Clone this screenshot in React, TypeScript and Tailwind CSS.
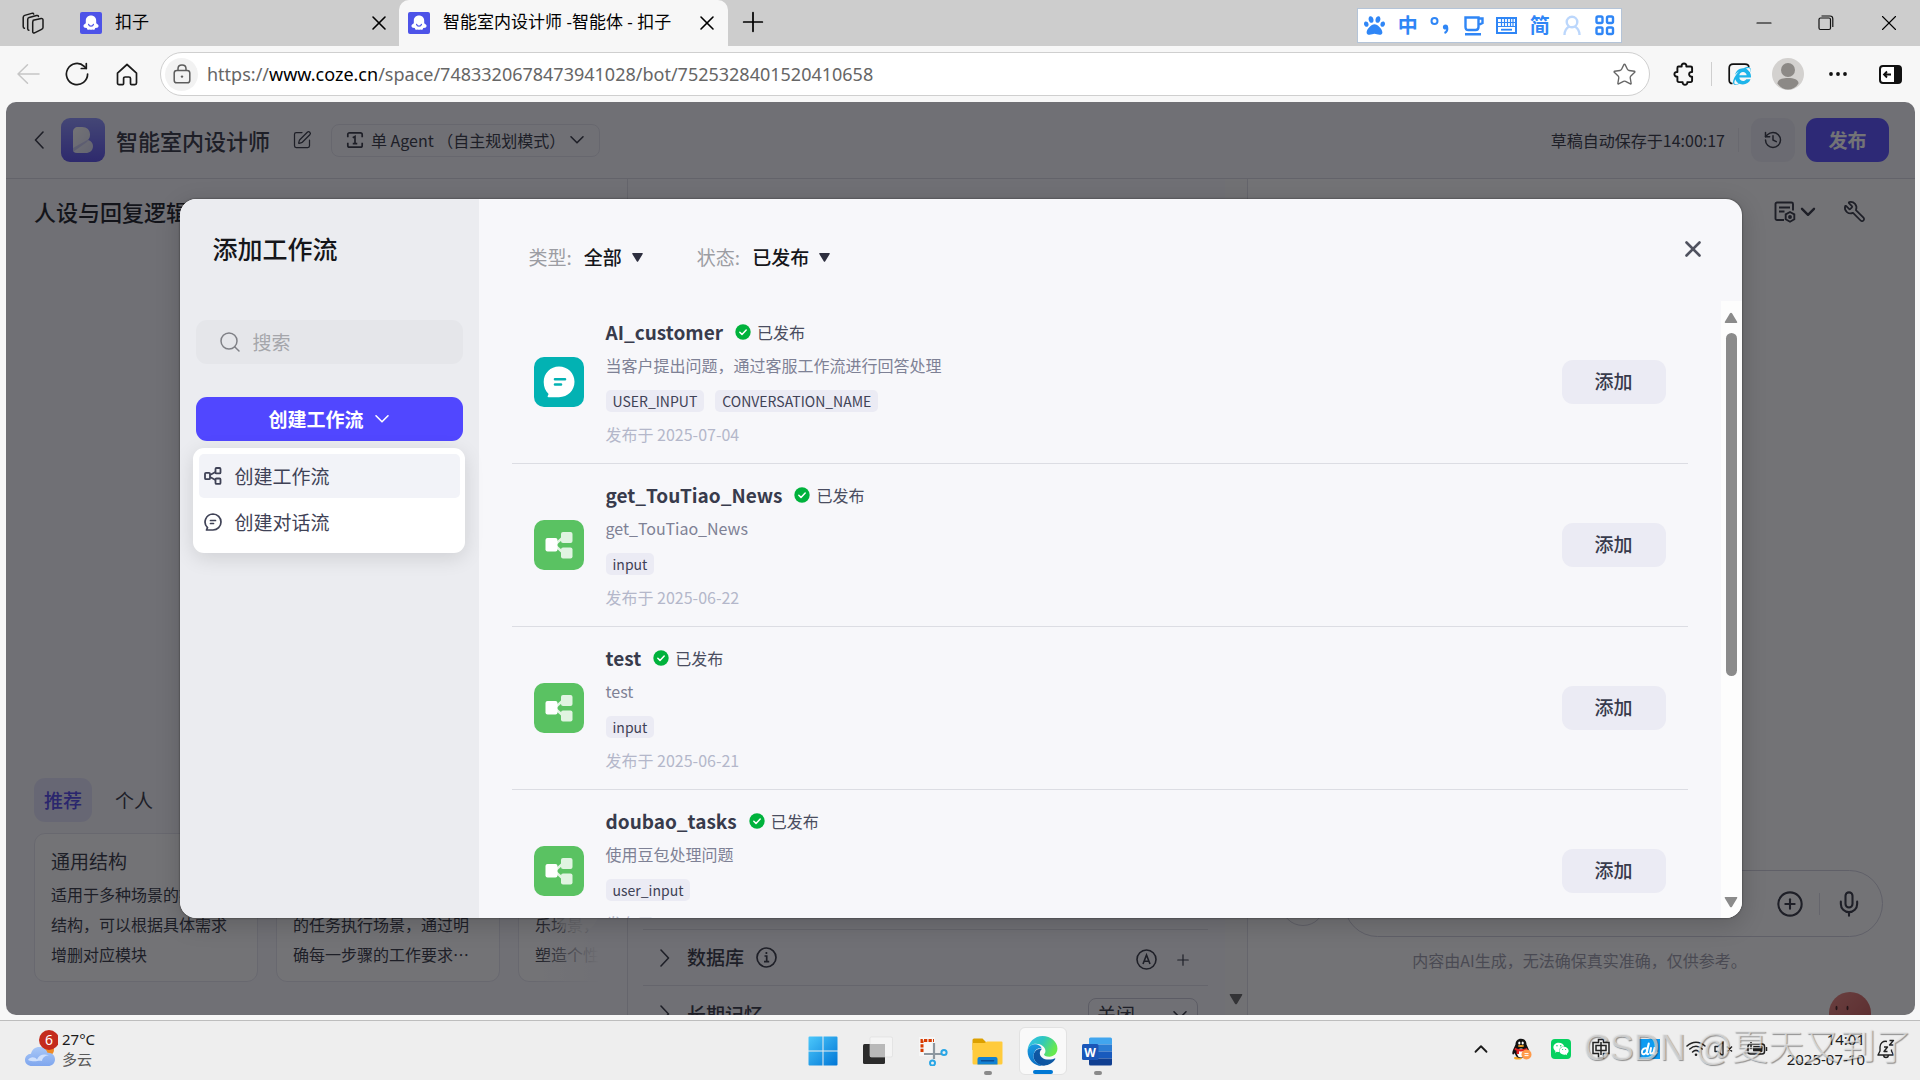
import React from "react";
import { ChevronRight, ChevronUp, CirclePlus, History, Mic, Minus, Plus, Search, SquarePen, Star, Wrench, X } from "lucide-react";
import { FaInternetExplorer, FaPaw, FaWeixin } from "react-icons/fa";

type Workflow = {
  name: string;
  desc: string;
  tags: string[];
  date: string;
  kind: "chat" | "flow";
};

const workflows: Workflow[] = [
  { name: "AI_customer", desc: "当客户提出问题，通过客服工作流进行回答处理", tags: ["USER_INPUT", "CONVERSATION_NAME"], date: "2025-07-04", kind: "chat" },
  { name: "get_TouTiao_News", desc: "get_TouTiao_News", tags: ["input"], date: "2025-06-22", kind: "flow" },
  { name: "test", desc: "test", tags: ["input"], date: "2025-06-21", kind: "flow" },
  { name: "doubao_tasks", desc: "使用豆包处理问题", tags: ["user_input"], date: "2025-06-20", kind: "flow" },
];

/* ---------- Thin angle icons ---------- */

function AngleDown({ className, bold }: { className?: string; bold?: boolean }) {
  return (
    <svg width="16" height="10" viewBox="0 0 16 10" fill="none" stroke="currentColor" strokeWidth={bold ? 2.4 : 1.6} strokeLinecap="round" strokeLinejoin="round" className={className} aria-hidden="true">
      <path d="M2 1.800l6 6 6-6" />
    </svg>
  );
}

function AngleSide({ className, left }: { className?: string; left?: boolean }) {
  return (
    <svg width="10" height="18" viewBox="0 0 10 18" fill="none" stroke="currentColor" strokeWidth="1.600" strokeLinecap="round" strokeLinejoin="round" className={className} aria-hidden="true">
      <path d={left ? "M9 1L1.500 9 9 17" : "M1 1l7.500 8L1 17"} />
    </svg>
  );
}

/* ---------- Browser chrome ---------- */

function CozeFavicon() {
  return (
    <svg width="22" height="22" viewBox="0 0 22 22" className="shrink-0" aria-hidden="true">
      <rect width="22" height="22" rx="2" fill="#4d53e8" />
      <path d="M11 3.6c-3.1 0-5.2 2.2-5.2 5.2v2.4l-1.9 1.6c-.9.9-.4 2.7.9 2.9l2 .2c.2 1.700 1.400 2.200 2.700 1.600.900.500 2.100.500 3 0 1.300.6 2.500.1 2.700-1.600l2-.2c1.300-.2 1.800-2 .9-2.900l-1.900-1.600V8.800c0-3-2.100-5.200-5.200-5.200z" fill="#fff" />
      <path d="M8.600 12.300c.6 2.300 4.200 2.300 4.800 0" fill="none" stroke="#4d53e8" strokeWidth="1.300" strokeLinecap="round" />
    </svg>
  );
}

function TabStrip() {
  return (
    <div className="flex h-[46px] shrink-0 bg-[#cdcdcd] font-['Noto_Sans','Noto_Sans_CJK_SC',sans-serif] text-black">
      <button aria-label="标签页操作" className="flex w-[66px] items-center justify-center">
        <svg width="24" height="24" viewBox="0 0 24 24" fill="none" stroke="#1b1b1b" strokeWidth="1.500" strokeLinejoin="round" strokeLinecap="round">
          <path d="M12.200 9.300l8-1.800c1-.2 1.800.4 1.800 1.400v7.600c0 .9-.5 1.500-1.400 1.800l-7 3.500c-1 .4-1.900 0-1.900-1.100v-9.400c0-1 .2-1.700 1-2z" />
          <path d="M7.800 19.300c-.9-.2-1.100-.7-1.100-1.500V8.600c0-1.200.5-1.800 1.500-2.200l7.300-1.800c1-.2 1.800 0 2 .8" />
          <path d="M3.400 17.300c-.9-.2-1.200-.8-1.200-1.700V6.600c0-1.200.5-1.900 1.500-2.200l7-2c1-.3 1.800-.1 2 .7" />
        </svg>
      </button>
      <div className="flex w-[333px] items-center gap-[13px] pl-3.5 pr-2">
        <CozeFavicon />
        <span className="flex-1 pb-0.5 text-[17px] leading-6">扣子</span>
        <button aria-label="关闭标签页">
          <X size={24} strokeWidth={1.6} />
        </button>
      </div>
      <div className="flex w-[329px] items-center gap-[13px] rounded-t-[10px] bg-[#f7f7f7] px-[9px]">
        <CozeFavicon />
        <span className="flex-1 whitespace-nowrap pb-0.5 text-[17px] leading-6">智能室内设计师 -智能体 - 扣子</span>
        <button aria-label="关闭标签页">
          <X size={24} strokeWidth={1.6} />
        </button>
      </div>
      <button aria-label="新建标签页" className="flex w-[50px] items-center justify-center pb-0.5">
        <Plus size={32} strokeWidth={1.3} />
      </button>
      <div className="flex-1" />
      <div className="mt-2 flex h-[35px] w-[265px] items-center justify-around border border-[#b4c4d8] bg-white text-[#2f86f6]">
        <FaPaw size={21} />
        <span className="text-[20px] font-bold leading-6">中</span>
        <svg width="20" height="20" viewBox="0 0 20 20" fill="none" stroke="currentColor">
          <circle cx="4.500" cy="5" r="3" strokeWidth="2" />
          <circle cx="15.500" cy="11" r="2.600" fill="currentColor" stroke="none" />
          <path d="M17.300 11.500c.3 2.800-.8 4.600-2.800 5.500" strokeWidth="2" />
        </svg>
        <svg width="21" height="21" viewBox="0 0 21 21" fill="none" stroke="currentColor" strokeWidth="2.400">
          <path d="M2.500 2.500h13v9.500c0 2-1 3-3 3h-7c-2 0-3-1-3-3zM15.500 3.500h4v4.500l-4 2M2 19.200h16" />
        </svg>
        <svg width="21" height="17" viewBox="0 0 21 17" fill="none" stroke="currentColor">
          <rect x="1" y="1" width="19" height="15" strokeWidth="2" />
          <path d="M2 5.500h17M2 9.500h17" strokeWidth="1.200" />
          <path d="M5.500 2v7.500M8.500 2v7.500M11.500 2v7.500M14.500 2v7.500M17 2v7.500" strokeWidth="1.200" />
          <path d="M5 12.700h11" strokeWidth="1.800" />
        </svg>
        <span className="text-[20px] font-bold leading-6">简</span>
        <svg width="20" height="21" viewBox="0 0 20 21" fill="none" stroke="#bcd7fc" strokeWidth="2.400">
          <circle cx="10" cy="7" r="5.300" />
          <path d="M2.500 20c0-4 2-7 4.700-8.500M17.500 20c0-4-2-7-4.700-8.500" />
        </svg>
        <svg width="20" height="21" viewBox="0 0 20 21" fill="none" stroke="currentColor" strokeWidth="2.400">
          <rect x="1.500" y="1.500" width="6" height="6.500" rx="1.500" />
          <rect x="12" y="1.500" width="6" height="6.500" rx="1.500" />
          <rect x="1.500" y="12.500" width="6" height="6.500" rx="1.500" />
          <rect x="12" y="12.500" width="6" height="6.500" rx="1.500" />
        </svg>
      </div>
      <div className="ml-[111px] flex w-[187px] items-center">
        <button aria-label="最小化" className="flex flex-1 justify-center">
          <Minus size={24} strokeWidth={1.2} />
        </button>
        <button aria-label="还原" className="flex flex-1 justify-center">
          <svg width="16" height="16" viewBox="0 0 16 16" fill="none" stroke="#111" strokeWidth="1.200">
            <rect x="1" y="3" width="11.500" height="11.500" rx="1.500" />
            <path d="M3.500 1h8.500c1.800 0 2.800 1 2.800 2.800V12" />
          </svg>
        </button>
        <button aria-label="关闭" className="flex flex-1 justify-center">
          <X size={26} strokeWidth={1} />
        </button>
      </div>
    </div>
  );
}

function Toolbar() {
  return (
    <div className="flex h-14 shrink-0 items-center bg-[#f7f7f7] text-[#1b1b1b]">
      <button aria-label="后退" className="flex w-14 justify-center">
        <svg width="24" height="22" viewBox="0 0 24 22" fill="none" stroke="#c6c6c6" strokeWidth="1.500" strokeLinecap="round" strokeLinejoin="round">
          <path d="M23 11H2M11.500 1.800L2 11l9.500 9.200" />
        </svg>
      </button>
      <button aria-label="刷新" className="flex w-[42px] justify-center">
        <svg width="24" height="24" viewBox="0 0 24 24" fill="none" stroke="currentColor" strokeWidth="1.700" strokeLinecap="round" strokeLinejoin="round">
          <path d="M22.600 12a10.600 10.600 0 1 1-3.400-7.700l2 2" />
          <path d="M21.300 1.500v5h-5" />
        </svg>
      </button>
      <button aria-label="主页" className="flex w-[58px] justify-center">
        <svg width="22" height="23" viewBox="0 0 22 23" fill="none" stroke="currentColor" strokeWidth="1.700" strokeLinejoin="round">
          <path d="M1.500 10.200L11 1.500l9.500 8.700v9.800c0 1-.6 1.600-1.600 1.600h-3.400c-.6 0-1-.4-1-1v-5c0-1-.6-1.600-1.600-1.600H9.200c-1 0-1.600.6-1.600 1.600v5c0 .6-.4 1-1 1H3.100c-1 0-1.600-.6-1.600-1.600z" />
        </svg>
      </button>
      <div className="ml-1 flex h-11 flex-1 items-center rounded-full border border-[#cfcfcf] bg-white pl-1 pr-3">
        <button aria-label="查看站点信息" className="flex size-[33px] items-center justify-center rounded-full bg-[#f2f2f2]">
          <svg width="18" height="20" viewBox="0 0 18 20" fill="none" stroke="#5c5c5c" strokeWidth="1.500">
            <rect x="1.200" y="6.500" width="15.600" height="12.300" rx="2.600" />
            <path d="M5 6.500V4.700C5 2.300 6.600 1 9 1s4 1.300 4 3.700v1.800" />
            <circle cx="9" cy="12.600" r="1.200" fill="#5c5c5c" stroke="none" />
          </svg>
        </button>
        <div role="textbox" aria-label="地址栏" className="ml-[9px] flex-1 whitespace-nowrap font-['Noto_Sans',sans-serif] text-[18px] leading-6 text-[#666]">
          https://<span className="text-black">www.coze.cn</span>/space/7483320678473941028/bot/7525328401520410658
        </div>
        <button aria-label="收藏">
          <Star size={25} strokeWidth={1.3} color="#666" />
        </button>
      </div>
      <button aria-label="扩展" className="ml-[23px]">
        <svg width="22" height="24" viewBox="0 0 22 24" fill="none" stroke="#111" strokeWidth="1.900" strokeLinejoin="round">
          <path d="M5.500 4.500h3.200c-.8-4 5.400-4 4.600 0h4.200c1 0 1.600.6 1.600 1.500v4c-4-.6-4 5.200 0 4.600v4c0 1-.6 1.500-1.600 1.500h-3.200c.8 3.500-5.400 3.500-4.600 0H6c-1 0-1.600-.5-1.600-1.500v-3.900c-4 .2-4-5.300 0-4.700V6c0-1 .5-1.500 1.100-1.500z" />
        </svg>
      </button>
      <div className="ml-4 h-6 w-px bg-[#cfcfcf]" />
      <button aria-label="Internet Explorer 模式" className="relative ml-4 size-6">
        <svg width="22" height="22" viewBox="0 0 22 22" fill="none" stroke="#111" strokeWidth="1.700">
          <path d="M4.500 20.500c-2.200 0-3.300-1.200-3.300-3.600V5c0-2.400 1.400-3.800 3.800-3.800h12c2.400 0 3.800 1 3.800 3" />
        </svg>
        <FaInternetExplorer size={18} color="#1eb4ea" className="absolute left-[5px] top-[5px]" />
      </button>
      <button aria-label="个人资料" className="ml-5">
        <svg width="32" height="32" viewBox="0 0 32 32">
          <circle cx="16" cy="16" r="16" fill="#d3d1cf" />
          <circle cx="16" cy="12" r="7" fill="#8c8986" />
          <path d="M5.500 25.500c0-4 4.500-5.500 10.500-5.500s10.500 1.500 10.500 5.500C24 29.500 20 31.500 16 31.500S8 29.500 5.500 25.500z" fill="#8c8986" />
        </svg>
      </button>
      <button aria-label="设置及其他" className="ml-6">
        <svg width="20" height="6" viewBox="0 0 20 6" fill="#111">
          <circle cx="3" cy="3" r="1.900" />
          <circle cx="10" cy="3" r="1.900" />
          <circle cx="17" cy="3" r="1.900" />
        </svg>
      </button>
      <button aria-label="侧边栏" className="ml-[31px] mr-[18px]">
        <svg width="23" height="19" viewBox="0 0 23 19">
          <rect x="1" y="1" width="21" height="17" rx="3" fill="#fff" stroke="#111" strokeWidth="2" />
          <path d="M15 1h5a2 2 0 0 1 2 2v13a2 2 0 0 1-2 2h-5z" fill="#111" />
          <path d="M12 9.500H5M8 6.500l-3 3 3 3" fill="none" stroke="#111" strokeWidth="1.800" />
        </svg>
      </button>
    </div>
  );
}

/* ---------- Agent editor behind the dialog ---------- */

function AgentHeader() {
  return (
    <header className="flex h-[77px] shrink-0 items-center border-b border-[#d8d8e2] bg-[#f7f7fc] pl-7 pr-[26px] text-[#2b2e3b]">
      <button aria-label="返回">
        <AngleSide left />
      </button>
      <svg width="44" height="44" viewBox="0 0 44 44" className="ml-[17px]" aria-hidden="true">
        <defs>
          <linearGradient id="agentBg" x1="0" y1="0" x2="0" y2="1">
            <stop offset="0" stopColor="#8a90ff" />
            <stop offset="1" stopColor="#5248e8" />
          </linearGradient>
          <linearGradient id="agentB" x1="0" y1="0" x2="1" y2="1">
            <stop offset="0" stopColor="#fff" />
            <stop offset="1" stopColor="#d9daf2" />
          </linearGradient>
        </defs>
        <rect width="44" height="44" rx="9" fill="url(#agentBg)" />
        <path d="M12 14c0-3 2-5 5-5h4c5 0 8 3 8 7.500 0 2.500-.6 4-2 5.500 3 .8 5 3 5 6 0 4.600-3 7-7.500 7H16c-3 0-4-1.500-4-4z" fill="url(#agentB)" />
        <path d="M12 30l16-9-2 3-14 10z" fill="#b9baf0" opacity=".7" />
      </svg>
      <h1 className="ml-[11px] text-[22px] font-medium leading-8">智能室内设计师</h1>
      <button aria-label="编辑" className="ml-[22px]">
        <SquarePen size={20} strokeWidth={1.5} />
      </button>
      <button className="ml-[19px] flex h-[33px] items-center rounded-lg border border-[#e2e2ec] px-3.5 text-[16px]">
        <svg width="18" height="18" viewBox="0 0 20 20" fill="none" stroke="currentColor" strokeWidth="1.900">
          <path d="M2 7V4c0-1.300.7-2 2-2h12c1.300 0 2 .7 2 2v3M2 13v3c0 1.300.7 2 2 2h12c1.300 0 2-.7 2-2v-3M7.500 7.500L10 6v8M7.500 14h5" />
        </svg>
        <span className="ml-[7px] whitespace-nowrap">单 Agent （自主规划模式）</span>
        <AngleDown className="ml-1" />
      </button>
      <div className="flex-1" />
      <span className="text-[16px] leading-6">草稿自动保存于14:00:17</span>
      <div className="ml-[13px] h-6 w-px bg-[#e6e6ee]" />
      <button aria-label="历史版本" className="ml-3 flex size-11 items-center justify-center rounded-[11px] bg-[#ebebf4]">
        <History size={20} strokeWidth={1.8} />
      </button>
      <button className="ml-[11px] h-11 w-[83px] rounded-[11px] bg-[#5147ff] text-[19px] font-bold text-white">发布</button>
    </header>
  );
}

function TemplateCard({ title, lines }: { title: string; lines: string[] }) {
  return (
    <article className="h-[149px] w-56 shrink-0 rounded-[11px] border border-[#e4e4ee] bg-white px-4 pt-3 text-[#2b2e3b]">
      <h3 className="text-[19px] leading-[29px]">{title}</h3>
      <div className="mt-1 text-[16px] leading-[30px]">
        {lines.map((line) => (
          <p key={line} className="whitespace-nowrap">
            {line}
          </p>
        ))}
      </div>
    </article>
  );
}

function PersonaPanel() {
  return (
    <section className="flex w-[622px] shrink-0 flex-col border-r border-[#dcdce6] bg-[#f7f7fc] pb-[33px] pl-7 pr-7 pt-4">
      <h2 className="text-[22px] font-medium leading-8 text-[#10131a]">人设与回复逻辑</h2>
      <div className="flex-1" />
      <div className="flex gap-[13px] text-[19px]">
        <button className="h-11 rounded-[11px] bg-[#e2e2fb] px-2.5 font-medium text-[#4a3fe8]">推荐</button>
        <button className="h-11 px-2.5 text-[#2b2e3b]">个人</button>
      </div>
      <div className="relative mt-[11px] flex gap-[18px] overflow-hidden">
        <TemplateCard title="通用结构" lines={["适用于多种场景的提示词", "结构，可以根据具体需求", "增删对应模块"]} />
        <TemplateCard title="任务执行" lines={["适用于有明确的工作步骤", "的任务执行场景，通过明", "确每一步骤的工作要求…"]} />
        <TemplateCard title="角色扮演" lines={["适用于聊天陪伴、互动娱", "乐场景，", "塑造个性"]} />
        <div className="absolute inset-y-0 right-0 w-16 bg-linear-to-r from-transparent to-[#f7f7fc]" />
        <button aria-label="下一组" className="absolute right-0 top-[56px] flex size-11 items-center justify-center rounded-full bg-white/60">
          <ChevronRight size={22} strokeWidth={3} />
        </button>
      </div>
    </section>
  );
}

function SkillsPanel() {
  return (
    <section className="flex w-[620px] shrink-0 border-r border-[#dcdce6] bg-[#f7f7fc] text-[#2b2e3b]">
      <div className="flex flex-1 flex-col justify-end pl-[15px] pr-[17px]">
        <div className="flex h-14 items-center border-t border-[#dcdce6] pl-[17px] pr-4">
          <AngleSide />
          <h3 className="ml-[17px] text-[19px] font-medium">数据库</h3>
          <svg width="21" height="21" viewBox="0 0 21 21" className="ml-3" fill="none" stroke="currentColor" strokeWidth="1.700">
            <circle cx="10.500" cy="10.500" r="9.500" />
            <path d="M8.500 9h2.200v5.500M8 14.700h5.200M10.400 5v2" />
          </svg>
          <div className="flex-1" />
          <svg width="21" height="21" viewBox="0 0 21 21" fill="none" stroke="currentColor" strokeWidth="1.600" className="mt-1">
            <circle cx="10.500" cy="10.500" r="9.500" />
            <path d="M7 15l3.500-9 3.500 9M8.200 12.300h4.600" />
          </svg>
          <Plus size={18} strokeWidth={1.6} className="ml-[17px] mt-1" />
        </div>
        <div className="h-[30px] overflow-hidden border-t border-[#dcdce6]">
          <div className="flex h-14 items-center pl-[17px] pr-2.5">
            <AngleSide />
            <h3 className="ml-[17px] flex-1 text-[19px] font-medium">长期记忆</h3>
            <div className="relative">
              <select aria-label="长期记忆" className="h-[33px] w-[110px] appearance-none rounded-lg border border-[#c6c6d4] pl-2 text-[19px] leading-7">
                <option>关闭</option>
              </select>
              <AngleDown className="absolute right-2.5 top-3" />
            </div>
          </div>
        </div>
      </div>
      <div className="flex w-[22px] flex-col items-center justify-end bg-[#fafafa] pb-[10px]">
        <svg width="14" height="12" viewBox="0 0 14 12" fill="#606060">
          <path d="M1.500 1h11c.8 0 1 .6.6 1.200L8 10.700c-.5.800-1.500.8-2 0L.9 2.200C.5 1.600.7 1 1.500 1z" />
        </svg>
      </div>
    </section>
  );
}

function PreviewPanel() {
  return (
    <section className="relative flex min-w-0 flex-1 flex-col overflow-hidden bg-white pb-[43px] text-[#2b2e3b]">
      <div className="flex items-center justify-end pr-[49px] pt-[21px]">
        <svg width="22" height="22" viewBox="0 0 22 22" fill="none" stroke="currentColor" strokeWidth="1.900">
          <path d="M10 19H3c-.8 0-1.500-.7-1.500-1.500V3c0-.8.7-1.500 1.500-1.500h14.500c.8 0 1.500.7 1.500 1.500v6.500M5 6.500h11M5 10.500h5.500" />
          <path d="M16 11l4.300 2.400v4.800L16 20.700l-4.300-2.500v-4.800z" />
          <circle cx="16" cy="16" r="1" fill="currentColor" />
        </svg>
        <AngleDown bold className="ml-1" />
        <Wrench size={23} strokeWidth={1.8} className="ml-[27px] -scale-x-100" />
      </div>
      <div className="flex-1" />
      <div className="flex items-center gap-[19px] pl-[33px] pr-8">
        <div className="size-11 rounded-full border border-[#d0d0dc]" />
        <div className="flex h-[67px] flex-1 items-center justify-end rounded-full border border-[#cfcfdd] pr-[19px]">
          <button aria-label="添加附件">
            <CirclePlus size={28} strokeWidth={1.8} />
          </button>
          <div className="mx-[15px] h-[22px] w-px bg-[#dcdce6]" />
          <button aria-label="语音输入">
            <Mic size={28} strokeWidth={1.8} />
          </button>
        </div>
      </div>
      <p className="mt-[11px] pr-1 text-center text-[16px] leading-6 text-[#9a9aa8]">内容由AI生成，无法确保真实准确，仅供参考。</p>
      <svg width="42" height="23" viewBox="0 0 42 23" className="absolute bottom-0 right-[44px]" aria-hidden="true">
        <defs>
          <linearGradient id="mascot" x1="0" y1="0" x2="1" y2="1">
            <stop offset="0" stopColor="#e88078" />
            <stop offset="1" stopColor="#c04a4a" />
          </linearGradient>
        </defs>
        <circle cx="21" cy="21" r="21" fill="url(#mascot)" />
        <ellipse cx="7.500" cy="16" rx="1" ry="2.300" fill="#3a1414" />
        <ellipse cx="18.500" cy="16" rx="1" ry="2.300" fill="#3a1414" />
      </svg>
    </section>
  );
}

/* ---------- Add-workflow dialog ---------- */

function WorkflowIcon({ kind }: { kind: Workflow["kind"] }) {
  if (kind === "chat") {
    return (
      <svg width="50" height="50" viewBox="0 0 50 50" className="shrink-0" aria-hidden="true">
        <rect width="50" height="50" rx="10" fill="#02b2b3" />
        <path d="M25 9.500c8.600 0 15.500 6.500 15.500 15.300S33.800 40.200 25 40.200H14.500c-.9 0-1.100-.6-.8-1.200l.9-2c-3.200-2.900-4.900-7-4.900-12C9.700 16 16.500 9.500 25 9.500z" fill="#fff" />
        <path d="M21 22.200h10M21 27.500h6" stroke="#02b2b3" strokeWidth="2.600" strokeLinecap="round" />
      </svg>
    );
  }
  return (
    <svg width="50" height="50" viewBox="0 0 50 50" className="shrink-0" aria-hidden="true">
      <rect width="50" height="50" rx="10" fill="#5ac262" />
      <path d="M30 16.500L20.500 25l9.500 8.500" fill="none" stroke="#e0f4e1" strokeWidth="2.400" />
      <rect x="27" y="12" width="11.500" height="11" rx="2" fill="#e0f4e1" />
      <rect x="27" y="27.500" width="11.500" height="11" rx="2" fill="#e0f4e1" />
      <rect x="11.500" y="18" width="12" height="13.500" rx="2" fill="#fff" />
    </svg>
  );
}

function WorkflowRow({ item }: { item: Workflow }) {
  return (
    <li className="flex items-center border-b border-[#dcdde3] px-[22px] pb-[17px] pt-4">
      <WorkflowIcon kind={item.kind} />
      <div className="ml-[22px] min-w-0 flex-1">
        <div className="flex items-center">
          <h3 className="text-[19px] font-semibold leading-[30px] text-[#383b4c]">{item.name}</h3>
          <svg width="16" height="16" viewBox="0 0 16 16" className="ml-3 shrink-0" aria-hidden="true">
            <circle cx="8" cy="8" r="7.700" fill="#00b23c" />
            <path d="M4.800 8.200l2.200 2.200 4.200-4.400" fill="none" stroke="#fff" strokeWidth="1.500" strokeLinecap="round" strokeLinejoin="round" />
          </svg>
          <span className="ml-1.5 text-[16px] leading-[30px] text-[#4a4d60]">已发布</span>
        </div>
        <p className="mt-1.5 text-[16px] leading-6 text-[#7e8195]">{item.desc}</p>
        <div className="mt-[13px] flex gap-[11px]">
          {item.tags.map((tag) => (
            <span key={tag} className="rounded-[5px] bg-[#ebebf4] px-[7px] text-[14px] leading-[22px] text-[#3f4256]">
              {tag}
            </span>
          ))}
        </div>
        <p className="mt-2.5 text-[16px] leading-6 text-[#b4b7ca]">发布于 {item.date}</p>
      </div>
      <button className="h-11 w-[104px] rounded-[11px] bg-[#ebebf4] text-[19px] font-medium text-[#383b4c]">添加</button>
    </li>
  );
}

function Filter({ id, label, value }: { id: string; label: string; value: string }) {
  return (
    <div className="flex items-center text-[19px] leading-7">
      <label htmlFor={id} className="text-[#9c9da3]">
        {label}:
      </label>
      <div className="relative ml-3">
        <select id={id} className="appearance-none bg-transparent pr-5 font-medium text-[#15161a]">
          <option>{value}</option>
        </select>
        <svg width="11" height="9" viewBox="0 0 11 9" className="pointer-events-none absolute right-0 top-2.5" fill="#2e2f3f">
          <path d="M.8 0h9.400c.6 0 .8.500.5 1L6.100 8.400c-.3.500-.9.500-1.200 0L.3 1C0 .5.200 0 .8 0z" />
        </svg>
      </div>
    </div>
  );
}

function DialogSidebar() {
  return (
    <aside className="w-[299px] shrink-0 rounded-l-2xl bg-[#ebecf0] px-4 pt-[31px]">
      <h2 className="pl-[17px] text-[25px] font-medium leading-9 text-[#15161a]">添加工作流</h2>
      <label className="mt-[54px] flex h-11 items-center rounded-[11px] bg-[#e5e6ea] pl-[22px]">
        <Search size={24} strokeWidth={1.5} color="#7f8086" className="shrink-0" />
        <input aria-label="搜索" placeholder="搜索" className="ml-[11px] w-full bg-transparent text-[19px] leading-7 outline-none placeholder:text-[#a5a6ab]" />
      </label>
      <div className="relative mt-[33px]">
        <button className="flex h-11 w-full items-center justify-center gap-2.5 rounded-[11px] bg-[#5147ff] text-[19px] font-bold text-white">
          创建工作流
          <AngleDown />
        </button>
        <div role="menu" className="absolute -left-[3px] -right-[2px] top-[51px] z-10 rounded-[11px] bg-white pb-[9px] pl-1.5 pr-[5px] pt-1.5 text-[19px] text-[#3f4256] shadow-[0_5px_20px_rgba(0,0,0,0.12)]">
          <button role="menuitem" className="flex h-11 w-full items-center gap-[13px] rounded-[5px] bg-[#f2f3f8] pl-[5px]">
            <svg width="18" height="18" viewBox="0 0 18 18" fill="none" stroke="currentColor" strokeWidth="1.800">
              <rect x="1" y="5.800" width="5" height="6.400" rx="1" />
              <rect x="11.500" y="1" width="5" height="5.400" rx="1" />
              <rect x="11.500" y="11.500" width="5" height="5.400" rx="1" />
              <path d="M6 8l5.500-3M6 10l5.500 3" />
            </svg>
            创建工作流
          </button>
          <button role="menuitem" className="mt-0.5 flex h-11 w-full items-center gap-[13px] rounded-[5px] pl-[5px]">
            <svg width="18" height="18" viewBox="0 0 18 18" fill="none" stroke="currentColor" strokeWidth="1.700" strokeLinecap="round">
              <path d="M9 1a8 8 0 1 1 0 16H2.500l1-2.300A8 8 0 0 1 9 1z" strokeLinejoin="round" />
              <path d="M6.500 7.500h5M6.500 10.500h3" />
            </svg>
            创建对话流
          </button>
        </div>
      </div>
    </aside>
  );
}

function AddWorkflowDialog() {
  return (
    <div role="dialog" aria-label="添加工作流" className="flex h-[719px] max-h-full w-full max-w-[1562px] overflow-hidden rounded-2xl bg-[#f7f7fa] shadow-[0_0_2px_rgba(0,0,0,0.6),0_6px_24px_rgba(0,0,0,0.18)]">
      <DialogSidebar />
      <div className="flex min-w-0 flex-1 flex-col">
        <div className="flex h-[102px] shrink-0 items-start pl-[50px] pr-9">
          <div className="flex flex-1 gap-[54px] pt-11">
            <Filter id="type" label="类型" value="全部" />
            <Filter id="status" label="状态" value="已发布" />
          </div>
          <button aria-label="关闭" className="mt-[37px]">
            <X size={26} strokeWidth={2.4} color="#50525f" />
          </button>
        </div>
        <div className="flex min-h-0 flex-1">
          <ul className="min-w-0 flex-1 overflow-hidden pl-[33px] pr-[33px]">
            {workflows.map((item) => (
              <WorkflowRow key={item.name} item={item} />
            ))}
          </ul>
          <div className="flex w-[21px] flex-col items-center bg-[#fdfdfd] pb-2.5 pt-[11px]">
            <svg width="14" height="12" viewBox="0 0 14 12" fill="#8b8b8b">
              <path d="M1.500 11h11c.8 0 1-.6.600-1.200L8 1.300c-.5-.8-1.500-.8-2 0L.9 9.800c-.4.600-.2 1.200.6 1.200z" />
            </svg>
            <div className="mt-[9px] h-[343px] w-[11px] rounded-full bg-[#8b8b8b]" />
            <div className="flex-1" />
            <svg width="14" height="12" viewBox="0 0 14 12" fill="#8b8b8b">
              <path d="M1.500 1h11c.8 0 1 .6.600 1.200L8 10.700c-.5.800-1.500.8-2 0L.9 2.200C.5 1.600.7 1 1.500 1z" />
            </svg>
          </div>
        </div>
      </div>
    </div>
  );
}

/* ---------- Windows taskbar ---------- */

function TaskSlot({ label, indicator, active, children }: { label: string; indicator?: "idle" | "active"; active?: boolean; children: React.ReactNode }) {
  return (
    <button aria-label={label} className="flex h-[59px] w-[55px] flex-col items-center justify-center">
      <span className={active ? "flex h-12 w-12 flex-col items-center rounded-md border border-[#e2e2e2] bg-[#f9f9f9] pt-2" : "flex h-12 w-12 flex-col items-center pt-[9px]"}>
        {children}
        {indicator === "idle" && <span className="mt-1 h-1 w-2 rounded-full bg-[#8a8a8a]" />}
        {indicator === "active" && <span className="mt-1 h-1 w-5 rounded-full bg-[#0078d4]" />}
      </span>
    </button>
  );
}

function Taskbar() {
  return (
    <footer className="relative grid h-[60px] shrink-0 grid-cols-[1fr_auto_1fr] items-center border-t border-[#bdbdbd] bg-[#eeeeee] font-['Noto_Sans','Noto_Sans_CJK_SC',sans-serif] text-[15px] leading-5 text-[#1b1b1b]">
      <button aria-label="天气" className="flex w-fit items-center gap-2 pb-1 pl-6 text-left">
        <svg width="34" height="40" viewBox="0 0 34 40" aria-hidden="true">
          <defs>
            <linearGradient id="cloud" x1="0" y1="0" x2="0" y2="1">
              <stop offset="0" stopColor="#a9c8f7" />
              <stop offset="1" stopColor="#7fa6ee" />
            </linearGradient>
          </defs>
          <circle cx="24" cy="21" r="6" fill="#f08a24" />
          <path d="M8 37c-4 0-7-2.500-7-6s2.500-6 6-6.300C8 20.500 11 18 15.500 18c4 0 7 2.300 8 5.800 4.500-.3 7.500 2.700 7.500 6.400 0 4-3 6.800-7 6.800z" fill="url(#cloud)" />
          <path d="M4 31c2-3.500 7-3.500 9-.5 1.500-4.500 7-6.500 12-4-4 0-6.500 2-7 5.500-4-1-7 2-14-1z" fill="#cfe0fc" />
          <circle cx="25" cy="11" r="10" fill="#c42b1c" />
          <text x="25" y="16" textAnchor="middle" fontSize="14" fontFamily="Noto Sans" fill="#fff">6</text>
        </svg>
        <span className="-ml-1">
          <span className="block">27°C</span>
          <span className="block text-[#5a5a5a]">多云</span>
        </span>
      </button>
      <div className="flex">
        <TaskSlot label="开始">
          <svg width="30" height="30" viewBox="0 0 30 30">
            <defs>
              <linearGradient id="win" x1="0" y1="0" x2="1" y2="1">
                <stop offset="0" stopColor="#4cc8fb" />
                <stop offset="1" stopColor="#0076d6" />
              </linearGradient>
            </defs>
            <path d="M1.500.5H14.500V14.500H.5V1.500a1 1 0 0 1 1-1zM15.500.5h13a1 1 0 0 1 1 1v13h-14zM.5 15.500h14v14h-13a1 1 0 0 1-1-1zM15.500 15.500h14v13a1 1 0 0 1-1 1h-13z" fill="url(#win)" />
          </svg>
        </TaskSlot>
        <TaskSlot label="任务视图">
          <svg width="30" height="30" viewBox="0 0 30 30">
            <rect x="0" y="8" width="22" height="20" rx="1.500" fill="#2b2b2b" />
            <rect x="7" y="1" width="22.500" height="20" rx="1.500" fill="#f4f4f4" stroke="#dcdcdc" strokeWidth=".6" />
            <path d="M7 8h15v13H7z" fill="#b9b9b9" />
          </svg>
        </TaskSlot>
        <TaskSlot label="截图工具">
          <svg width="30" height="30" viewBox="0 0 30 30" fill="none">
            <path d="M1 1h16v19H1z" fill="#f6f6f6" />
            <path d="M4 16V4.500h12" stroke="#d83b01" strokeWidth="3" strokeDasharray="3.300 1.200" />
            <path d="M16 7v16M6 18h18" stroke="#8d979f" strokeWidth="2.200" />
            <circle cx="26" cy="16.500" r="2.600" stroke="#29a6e6" strokeWidth="2" />
            <circle cx="14.500" cy="27" r="2.500" stroke="#29a6e6" strokeWidth="2" />
          </svg>
        </TaskSlot>
        <TaskSlot label="文件资源管理器" indicator="idle">
          <svg width="31" height="31" viewBox="0 0 31 31">
            <path d="M.5 4a1.500 1.500 0 0 1 1.500-1.500h8.500L14 6H30v8H.5z" fill="#dca000" />
            <path d="M.5 7h12l2.500-1.500h14.500a1 1 0 0 1 1 1V27a1.500 1.500 0 0 1-1.500 1.500H2A1.500 1.500 0 0 1 .5 27z" fill="#ffcb3c" />
            <path d="M5.500 28.500V23a2 2 0 0 1 2-2h16a2 2 0 0 1 2 2v5.500z" fill="#1181d2" />
            <path d="M9.500 24.800h12" stroke="#0a4f96" strokeWidth="1.500" strokeLinecap="round" />
          </svg>
        </TaskSlot>
        <TaskSlot label="Microsoft Edge" indicator="active" active>
          <svg width="31" height="31" viewBox="0 0 256 256">
            <defs>
              <linearGradient id="edgeA" x1="0" y1="1" x2="1" y2="0">
                <stop offset="0" stopColor="#0a4f9e" />
                <stop offset="1" stopColor="#1361a8" />
              </linearGradient>
              <linearGradient id="edgeB" x1=".2" y1="0" x2=".4" y2="1">
                <stop offset="0" stopColor="#1b9de2" />
                <stop offset="1" stopColor="#0b6fc4" />
              </linearGradient>
              <linearGradient id="edgeC" x1="0" y1="0" x2="1" y2=".4">
                <stop offset="0" stopColor="#35c1f1" />
                <stop offset=".5" stopColor="#2ec6c0" />
                <stop offset="1" stopColor="#66e94f" />
              </linearGradient>
            </defs>
            <path d="M231 190.500c-8 4-70 26-110-10-22-22-20-52 2-70-30-6-62 12-72 50-6 40 30 88 90 92 44-2 78-28 96-56 2-5-2-8-6-6z" fill="url(#edgeA)" />
            <path d="M105 241C60 228 40 180 58 140c12-26 34-40 62-34-4-22-34-38-62-36C24 74 2 98 1 130c0 72 56 124 120 125-6-2-11-7-16-14z" fill="url(#edgeB)" />
            <path d="M1 122C6 54 62 1 128 1c72 0 127 50 127 106 0 40-32 70-68 70-32 0-46-10-46-19 0-6 12-10 12-30 0-34-36-62-80-62C40 66 12 86 1 122z" fill="url(#edgeC)" />
          </svg>
        </TaskSlot>
        <TaskSlot label="Word" indicator="idle">
          <svg width="31" height="31" viewBox="0 0 31 31">
            <path d="M7 3a1.500 1.500 0 0 1 1.500-1.500h20A1.500 1.500 0 0 1 30 3v5.500H7z" fill="#41a5ee" />
            <path d="M7 8.500h23v7H7z" fill="#2b7cd3" />
            <path d="M7 15.500h23v7H7z" fill="#185abd" />
            <path d="M7 22.500h23V28a1.500 1.500 0 0 1-1.500 1.500h-20A1.500 1.500 0 0 1 7 28z" fill="#103f91" />
            <rect x="0" y="8" width="16.500" height="16" rx="1.500" fill="#1a56b8" />
            <text x="8" y="20.500" textAnchor="middle" fontSize="12" fontWeight="700" fontFamily="Noto Sans" fill="#fff">W</text>
          </svg>
        </TaskSlot>
      </div>
      <div className="flex items-center justify-end pb-1 pr-[25px]">
        <ChevronUp size={22} strokeWidth={2} className="mr-5" />
        <svg width="20" height="22" viewBox="0 0 20 22" className="mr-[19px]" aria-hidden="true">
          <ellipse cx="6" cy="20" rx="4" ry="1.500" fill="#f5a623" />
          <path d="M9 .8c-3.600 0-5.500 2.500-5.500 5.700L1 12c-1 2.500-.8 4.500 0 4.500.6 0 1.300-1 1.800-1.600C3.500 18.500 6 20 9 20s5.500-1.500 6.200-5.100c.5.600 1.200 1.600 1.800 1.600.8 0 1-2 0-4.500l-2.500-5.500C14.500 3.300 12.600.8 9 .8z" fill="#111" />
          <ellipse cx="9" cy="15" rx="4" ry="4.500" fill="#fff" />
          <ellipse cx="7.300" cy="5" rx="1.100" ry="1.600" fill="#fff" />
          <ellipse cx="10.700" cy="5" rx="1.100" ry="1.600" fill="#fff" />
          <ellipse cx="9" cy="8" rx="3.200" ry="1" fill="#f5a623" />
          <path d="M3 9.800c4 2 8 2 12 0l.5 2.200c-3.500 1.500-6 1.700-8.500 1.300V16H4.500v-3.500L2.500 12z" fill="#e02020" />
          <circle cx="14.500" cy="16.500" r="5" fill="#ff9a4a" />
          <path d="M12.500 15.600h4M12.500 17.600h4" stroke="#fff" />
        </svg>
        <span className="mr-5 flex size-5 items-center justify-center rounded bg-[#07d160] text-white">
          <FaWeixin size={16} />
        </span>
        <svg width="20" height="21" viewBox="0 0 20 21" className="mr-7" fill="none" stroke="#222" strokeWidth="1.500">
          <path d="M2 4.500h5.500v-3h5v3H18v11h-5.500V20h-5v-4.500H2zM5 7.500h10v5H5zM10 4v13" />
        </svg>
        <svg width="21" height="20" viewBox="0 0 21 20" className="mr-[26px]" fill="none" stroke="#fff" strokeWidth="2" strokeLinecap="round" strokeLinejoin="round">
          <rect width="21" height="20" fill="#0d9bf2" stroke="none" />
          <path d="M7.500 9.500c-3-1-5 2-4.500 4.500.5 2 3.500 1.500 4.500-1l2.300-8.500-2 9c-.3 1.500.7 2 1.500 1.500M12 9l-.8 4c-.3 2.300 2.500 2 3.500-.3L15.600 9l-1 5c0 1.500 2 1.200 3.200-.5" />
        </svg>
        <svg width="20" height="17" viewBox="0 0 20 17" className="mr-2" fill="none" stroke="#222" strokeWidth="1.600" strokeLinecap="round">
          <path d="M1 6c5.500-5 12.500-5 18 0M3.800 9c4-3.500 8.400-3.500 12.400 0M6.600 12c2.200-2 4.600-2 6.800 0" />
          <circle cx="10" cy="14.800" r="1.300" fill="#222" stroke="none" />
        </svg>
        <svg width="20" height="16" viewBox="0 0 20 16" className="mr-3" fill="none" stroke="#222" strokeWidth="1.400" strokeLinejoin="round">
          <path d="M1 5.500h3L9 1v14l-5-4.500H1zM13 5.500l5 5M18 5.500l-5 5" />
        </svg>
        <svg width="22" height="14" viewBox="0 0 22 14" className="mr-[19px]" fill="none" stroke="#222" strokeWidth="1.500">
          <rect x="2" y="2" width="16.500" height="10" rx="2.500" />
          <rect x="7" y="4" width="9.500" height="6" rx="1" fill="#222" stroke="none" />
          <path d="M20.500 5v4M5 0v7" />
        </svg>
        <div className="mr-3 text-right">
          <div>14:01</div>
          <div>2025-07-10</div>
        </div>
        <svg width="18" height="20" viewBox="0 0 18 20" fill="none" stroke="#222" strokeWidth="1.400" strokeLinejoin="round">
          <path d="M10 2.500C6 1.500 3 4.500 3 8v4l-2 4h15.500l-2-4v-1.500M6.500 16.500c.5 2.700 4.500 2.700 5 0M12.500 1.500h4l-4 4.500h4M7 8h3.500L7 12.500h3.500" />
        </svg>
      </div>
      <div className="pointer-events-none absolute right-2 top-1 whitespace-nowrap font-['Liberation_Sans','Noto_Sans_CJK_SC',sans-serif] text-[36px] font-light leading-[46px] text-[#e6e6e6]/70 [text-shadow:1px_1px_1px_rgba(0,0,0,0.4)]">
        CSDN @夏天又到了
      </div>
    </footer>
  );
}

export default function App() {
  return (
    <div className="flex h-screen flex-col overflow-hidden bg-[#f7f7f7] font-['Noto_Sans_CJK_SC',sans-serif]">
      <TabStrip />
      <Toolbar />
      <main className="relative mb-[5px] ml-1.5 mr-[5px] flex min-h-0 flex-1 flex-col overflow-hidden rounded-[10px]">
        <AgentHeader />
        <div className="flex min-h-0 flex-1">
          <PersonaPanel />
          <SkillsPanel />
          <PreviewPanel />
        </div>
        <div className="absolute inset-0 flex items-center justify-center bg-[rgba(22,22,26,0.6)]">
          <AddWorkflowDialog />
        </div>
      </main>
      <Taskbar />
    </div>
  );
}
